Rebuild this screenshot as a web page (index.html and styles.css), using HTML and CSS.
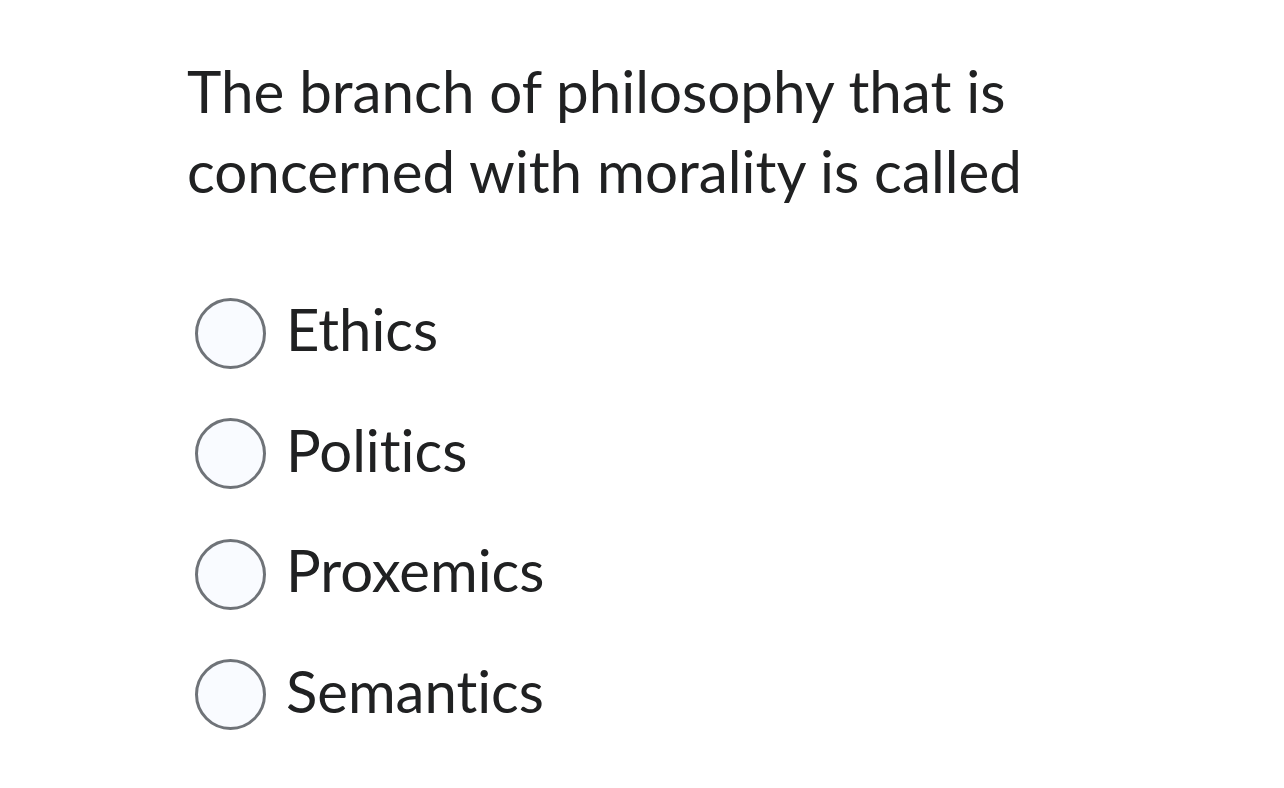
FILE: index.html
```html
<!DOCTYPE html>
<html>
<head>
<meta charset="utf-8">
<link rel="stylesheet" href="styles.css">
</head>
<body>
<div class="question">
  <p class="prompt">The branch of philosophy that is<br>concerned with morality is called</p>
  <ul class="options">
    <li class="option"><span class="radio"></span><span class="label">Ethics</span></li>
    <li class="option"><span class="radio"></span><span class="label">Politics</span></li>
    <li class="option"><span class="radio"></span><span class="label">Proxemics</span></li>
    <li class="option"><span class="radio"></span><span class="label">Semantics</span></li>
  </ul>
</div>
</body>
</html>
```
FILE: styles.css
```css
html, body {
  margin: 0;
  padding: 0;
  background: #ffffff;
}
body {
  font-family: Lato, "Liberation Sans", sans-serif;
  color: #202122;
  font-variant-ligatures: none;
}
.question {
  padding: 50px 0 0 187px;
}
.prompt {
  margin: 0;
  font-size: 58.3px;
  line-height: 80px;
}
.options {
  list-style: none;
  margin: 0;
  padding: 88px 0 0 8px;
  display: flex;
  flex-direction: column;
  gap: 50.5px;
}
.option {
  display: flex;
  align-items: center;
  gap: 20px;
  height: 70px;
}
.radio {
  box-sizing: border-box;
  width: 71px;
  height: 71px;
  border-radius: 50%;
  border: 3px solid #6f7378;
  background: #f9fbff;
  flex: none;
}
.label {
  font-size: 58px;
  line-height: 70px;
  padding-bottom: 8px;
}
```
